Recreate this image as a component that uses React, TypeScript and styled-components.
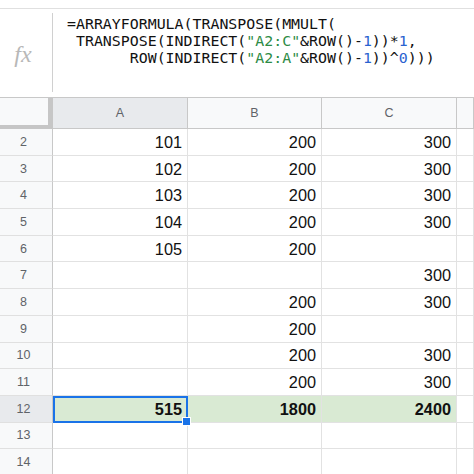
import React from "react";
import styled, { createGlobalStyle, css } from "styled-components";

const Global = createGlobalStyle`
  html, body { margin: 0; padding: 0; background: #ffffff; }
  * { box-sizing: border-box; }
`;

const Page = styled.div`
  width: 474px;
  height: 474px;
  overflow: hidden;
  background: #ffffff;
  padding-top: 8px;
  font-family: "Liberation Sans", Arial, sans-serif;
`;

const FormulaBar = styled.div`
  display: grid;
  grid-template-columns: 52px 1px 1fr;
  height: 90px;
  border-top: 1px solid #e0e0e0;
  border-bottom: 1px solid #c8c8c8;
`;

const FxBox = styled.div`
  display: flex;
  align-items: center;
  justify-content: center;
  padding: 3px 6px 0 0;
  font-family: "Liberation Serif", "Times New Roman", serif;
  font-style: italic;
  font-size: 24px;
  color: #b8b8b8;
`;

const Divider = styled.div`
  margin: 4px 0 5px;
  background: #d0d0d0;
`;

const Code = styled.pre`
  margin: 0;
  padding: 7px 0 0 14px;
  font-family: "DejaVu Sans Mono", "Liberation Mono", monospace;
  font-size: 14.9px;
  line-height: 17px;
  color: #111;
  white-space: pre;
  overflow: hidden;
`;

const Str = styled.span`
  color: #2e8b45;
`;

const Num = styled.span`
  color: #2a62d0;
`;

const Grid = styled.div`
  display: flex;
  flex-direction: column;
`;

const Row = styled.div<{ $header?: boolean }>`
  display: grid;
  grid-template-columns: 53px 135px 134px 135px 1fr;
  height: ${(p) => (p.$header ? "31px" : "26.7px")};
`;

const Corner = styled.div`
  background: #f8f9fa;
  border-right: 5px solid #c6c6c6;
  border-bottom: 4px solid #c6c6c6;
`;

const ColHead = styled.div<{ $active?: boolean }>`
  display: flex;
  align-items: center;
  justify-content: center;
  font-size: 12.5px;
  color: #5f6368;
  background: ${(p) => (p.$active ? "#e8eaed" : "#f8f9fa")};
  border-right: 1px solid #c8c8c8;
  border-bottom: 1px solid #c8c8c8;
`;

const RowHead = styled.div<{ $active?: boolean }>`
  display: flex;
  align-items: center;
  justify-content: center;
  padding-right: 5px;
  font-size: 12.5px;
  color: #5f6368;
  background: ${(p) => (p.$active ? "#e8eaed" : "#f8f9fa")};
  border-right: 1px solid #c8c8c8;
  border-bottom: 1px solid #e0e0e0;
`;

const Cell = styled.div<{ $total?: boolean; $selected?: boolean; $last?: boolean }>`
  position: relative;
  display: flex;
  align-items: center;
  justify-content: flex-end;
  padding: 1px 5px 0 4px;
  font-size: 16.3px;
  color: #111;
  border-right: 1px solid #e2e2e2;
  border-bottom: 1px solid #e2e2e2;
  ${(p) =>
    p.$total &&
    !p.$last &&
    css`
      background: #d9ead3;
      font-weight: bold;
    `}
  ${(p) =>
    p.$selected &&
    css`
      outline: 2px solid #1a73e8;
      outline-offset: -2px;
    `}
`;

const Handle = styled.span`
  position: absolute;
  right: -4px;
  bottom: -4px;
  width: 7px;
  height: 7px;
  background: #1a73e8;
  border: 1px solid #ffffff;
  box-sizing: content-box;
  z-index: 2;
`;

const rows: [number, string, string, string][] = [
  [2, "101", "200", "300"],
  [3, "102", "200", "300"],
  [4, "103", "200", "300"],
  [5, "104", "200", "300"],
  [6, "105", "200", ""],
  [7, "", "", "300"],
  [8, "", "200", "300"],
  [9, "", "200", ""],
  [10, "", "200", "300"],
  [11, "", "200", "300"],
  [12, "515", "1800", "2400"],
  [13, "", "", ""],
  [14, "", "", ""],
];

export default function App() {
  return (
    <Page>
      <Global />
      <FormulaBar>
        <FxBox>fx</FxBox>
        <Divider />
        <Code>
          {"=ARRAYFORMULA(TRANSPOSE(MMULT(\n TRANSPOSE(INDIRECT("}
          <Str>"A2:C"</Str>
          {"&ROW()-"}
          <Num>1</Num>
          {"))*"}
          <Num>1</Num>
          {",\n       ROW(INDIRECT("}
          <Str>"A2:A"</Str>
          {"&ROW()-"}
          <Num>1</Num>
          {"))^"}
          <Num>0</Num>
          {")))"}
        </Code>
      </FormulaBar>
      <Grid>
        <Row $header>
          <Corner />
          <ColHead $active>A</ColHead>
          <ColHead>B</ColHead>
          <ColHead>C</ColHead>
          <ColHead />
        </Row>
        {rows.map(([n, a, b, c]) => {
          const total = n === 12;
          return (
            <Row key={n}>
              <RowHead $active={total}>{n}</RowHead>
              <Cell $total={total} $selected={total}>
                {a}
                {total && <Handle />}
              </Cell>
              <Cell $total={total}>{b}</Cell>
              <Cell $total={total}>{c}</Cell>
              <Cell $total={total} $last />
            </Row>
          );
        })}
      </Grid>
    </Page>
  );
}
